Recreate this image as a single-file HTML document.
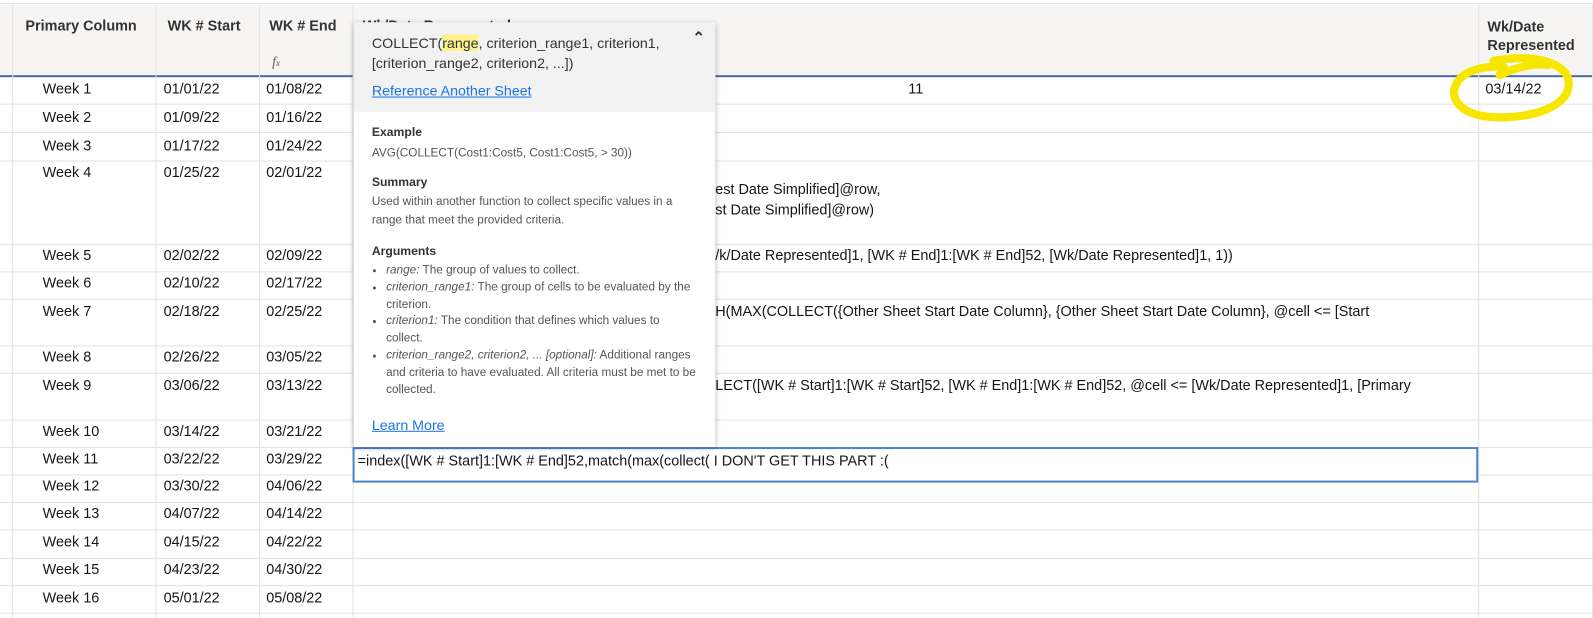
<!DOCTYPE html>
<html><head><meta charset="utf-8"><style>
*{margin:0;padding:0;box-sizing:border-box}
body{width:1593px;height:608px;overflow:hidden;background:#fff;font-family:"Liberation Sans",Arial,sans-serif;color:#161616;position:relative}
#w{position:absolute;left:0;top:0;width:1568px;height:600px;transform:scale(1.016);transform-origin:0 0}
.abs{position:absolute;white-space:nowrap}
.hl{position:absolute;left:0;width:1568px;height:1px;background:#e2e2e2}
.vl{position:absolute;width:1px;background:#e2e2e2}
.c{position:absolute;font-size:14.2px;white-space:nowrap}
.h{position:absolute;font-size:14.2px;font-weight:bold;color:#333}
</style></head><body><div id="w">
<div class="abs" style="left:0;top:0;width:1568px;height:4px;background:#fff;border-bottom:1px solid #ddd"></div>
<div class="abs" style="left:0;top:5px;width:1568px;height:70px;background:#f6f5f4"></div>
<div class="abs" style="left:0;top:74px;width:1568px;height:2px;background:#4a6aa8"></div>
<div class="vl" style="left:12px;top:5px;height:603px"></div>
<div class="vl" style="left:153px;top:5px;height:603px"></div>
<div class="vl" style="left:255px;top:5px;height:603px"></div>
<div class="vl" style="left:347px;top:5px;height:603px"></div>
<div class="vl" style="left:1455px;top:5px;height:603px"></div>
<div class="vl" style="left:1567px;top:5px;height:603px"></div>
<div class="h" style="left:25px;top:18px">Primary Column</div>
<div class="h" style="left:165px;top:18px">WK # Start</div>
<div class="h" style="left:265px;top:18px">WK # End</div>
<div class="abs" style="left:268px;top:53px;font-size:13px;font-style:italic;color:#555;font-family:'Liberation Serif',serif">f<span style="font-size:9px">x</span></div>
<div class="h" style="left:1464px;top:18px;line-height:18px">Wk/Date<br>Represented</div>
<div class="h" style="left:357px;top:18px">Wk/Date Represented</div>

<div class="hl" style="top:102px"></div><div class="hl" style="top:130px"></div><div class="hl" style="top:158px"></div><div class="hl" style="top:240px"></div><div class="hl" style="top:267px"></div><div class="hl" style="top:294px"></div><div class="hl" style="top:340px"></div><div class="hl" style="top:367px"></div><div class="hl" style="top:413px"></div><div class="hl" style="top:440px"></div><div class="hl" style="top:467px"></div><div class="hl" style="top:494px"></div><div class="hl" style="top:521px"></div><div class="hl" style="top:549px"></div><div class="hl" style="top:576px"></div><div class="hl" style="top:603px"></div>

<div class="c" style="left:42px;top:80px">Week 1</div><div class="c" style="left:161px;top:80px">01/01/22</div><div class="c" style="left:262px;top:80px">01/08/22</div>
<div class="c" style="left:42px;top:108px">Week 2</div><div class="c" style="left:161px;top:108px">01/09/22</div><div class="c" style="left:262px;top:108px">01/16/22</div>
<div class="c" style="left:42px;top:136px">Week 3</div><div class="c" style="left:161px;top:136px">01/17/22</div><div class="c" style="left:262px;top:136px">01/24/22</div>
<div class="c" style="left:42px;top:162px">Week 4</div><div class="c" style="left:161px;top:162px">01/25/22</div><div class="c" style="left:262px;top:162px">02/01/22</div>
<div class="c" style="left:42px;top:244px">Week 5</div><div class="c" style="left:161px;top:244px">02/02/22</div><div class="c" style="left:262px;top:244px">02/09/22</div>
<div class="c" style="left:42px;top:271px">Week 6</div><div class="c" style="left:161px;top:271px">02/10/22</div><div class="c" style="left:262px;top:271px">02/17/22</div>
<div class="c" style="left:42px;top:299px">Week 7</div><div class="c" style="left:161px;top:299px">02/18/22</div><div class="c" style="left:262px;top:299px">02/25/22</div>
<div class="c" style="left:42px;top:344px">Week 8</div><div class="c" style="left:161px;top:344px">02/26/22</div><div class="c" style="left:262px;top:344px">03/05/22</div>
<div class="c" style="left:42px;top:372px">Week 9</div><div class="c" style="left:161px;top:372px">03/06/22</div><div class="c" style="left:262px;top:372px">03/13/22</div>
<div class="c" style="left:42px;top:417px">Week 10</div><div class="c" style="left:161px;top:417px">03/14/22</div><div class="c" style="left:262px;top:417px">03/21/22</div>
<div class="c" style="left:42px;top:444px">Week 11</div><div class="c" style="left:161px;top:444px">03/22/22</div><div class="c" style="left:262px;top:444px">03/29/22</div>
<div class="c" style="left:42px;top:471px">Week 12</div><div class="c" style="left:161px;top:471px">03/30/22</div><div class="c" style="left:262px;top:471px">04/06/22</div>
<div class="c" style="left:42px;top:498px">Week 13</div><div class="c" style="left:161px;top:498px">04/07/22</div><div class="c" style="left:262px;top:498px">04/14/22</div>
<div class="c" style="left:42px;top:526px">Week 14</div><div class="c" style="left:161px;top:526px">04/15/22</div><div class="c" style="left:262px;top:526px">04/22/22</div>
<div class="c" style="left:42px;top:553px">Week 15</div><div class="c" style="left:161px;top:553px">04/23/22</div><div class="c" style="left:262px;top:553px">04/30/22</div>
<div class="c" style="left:42px;top:581px">Week 16</div><div class="c" style="left:161px;top:581px">05/01/22</div><div class="c" style="left:262px;top:581px">05/08/22</div>

<div class="c" style="left:894px;top:80px">11</div>
<div class="c" style="left:1462px;top:80px">03/14/22</div>
<div class="c" style="left:704px;top:177px;line-height:20px">est Date Simplified]@row,<br>st Date Simplified]@row)</div>
<div class="c" style="left:704px;top:244px">/k/Date Represented]1, [WK # End]1:[WK # End]52, [Wk/Date Represented]1, 1))</div>
<div class="c" style="left:704px;top:299px">H(MAX(COLLECT({Other Sheet Start Date Column}, {Other Sheet Start Date Column}, @cell &lt;= [Start</div>
<div class="c" style="left:704px;top:372px">LECT([WK # Start]1:[WK # Start]52, [WK # End]1:[WK # End]52, @cell &lt;= [Wk/Date Represented]1, [Primary</div>

<svg class="abs" style="left:1420px;top:48px" width="140" height="80"><path d="M50 12 C90 4 126 14 124 36 C122 60 80 70 45 67 C18 64 8 50 12 38 C17 22 40 16 60 18 L56 26 C72 18 90 14 104 16" fill="none" stroke="#f7e600" stroke-width="8" stroke-linecap="round" stroke-linejoin="round"/></svg>

<div class="abs" style="left:347px;top:440px;width:1108px;height:35px;border:2px solid #4a86c8;background:#fff"></div>
<div class="c" style="left:352px;top:446px">=index([WK # Start]1:[WK # End]52,match(max(collect( I DON'T GET THIS PART :(</div>

<div class="abs" style="left:348px;top:22px;width:356px;height:418px;background:#fff;box-shadow:0 1px 5px rgba(0,0,0,.3);white-space:normal">
 <div style="background:#f2f2f2;height:88px;padding:10px 18px 0 18px;font-size:14px;color:#333;line-height:20px">COLLECT(<span style="background:#fdf28b">range</span>, criterion_range1, criterion1,<br>[criterion_range2, criterion2, ...])
 <div style="margin-top:7px;color:#1a73e8;text-decoration:underline">Reference Another Sheet</div>
 <div style="position:absolute;right:10px;top:6px;font-size:15px;font-weight:bold">&#8963;</div></div>
 <div style="padding:12px 14px 0 18px;font-size:11.6px;color:#555;line-height:17px">
  <div style="font-weight:bold;color:#333;font-size:12px">Example</div>
  <div style="margin-top:3px">AVG(COLLECT(Cost1:Cost5, Cost1:Cost5, &gt; 30))</div>
  <div style="font-weight:bold;color:#333;font-size:12px;margin-top:12px">Summary</div>
  <div style="margin-top:2px;line-height:18px">Used within another function to collect specific values in a range that meet the provided criteria.</div>
  <div style="font-weight:bold;color:#333;font-size:12px;margin-top:13px">Arguments</div>
  <ul style="padding-left:14px;line-height:16.8px;margin-top:2px;padding-right:4px">
   <li><i>range:</i> The group of values to collect.</li>
   <li><i>criterion_range1:</i> The group of cells to be evaluated by the criterion.</li>
   <li><i>criterion1:</i> The condition that defines which values to collect.</li>
   <li><i>criterion_range2, criterion2, ... [optional]:</i> Additional ranges and criteria to have evaluated. All criteria must be met to be collected.</li>
  </ul>
  <div style="margin-top:18px;font-size:14px;color:#1a73e8;text-decoration:underline">Learn More</div>
 </div>
</div>
</div></body></html>
